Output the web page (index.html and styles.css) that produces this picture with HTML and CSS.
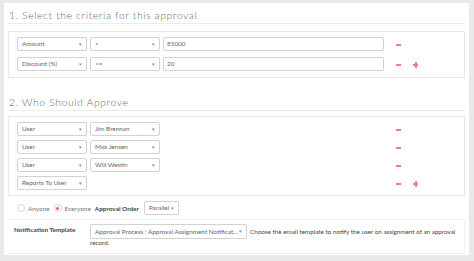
FILE: index.html
```html
<!DOCTYPE html>
<html lang="en">
<head>
    <meta charset="UTF-8">
    <title>Approval Criteria</title>
    <link rel="stylesheet" href="styles.css">
</head>
<body>
    <div class="panel">
        <h2 class="section-title">1. Select the criteria for this approval</h2>

        <!-- Criteria rows -->
        <div class="box">
            <div class="row">
                <div class="select">Amount<span class="caret">&#9662;</span></div>
                <div class="select">&gt;<span class="caret">&#9662;</span></div>
                <div class="input">85000</div>
                <div class="actions"><span class="minus"></span></div>
            </div>
            <div class="row">
                <div class="select">Discount (%)<span class="caret">&#9662;</span></div>
                <div class="select">&gt;=<span class="caret">&#9662;</span></div>
                <div class="input">20</div>
                <div class="actions"><span class="minus"></span><span class="plus"></span></div>
            </div>
        </div>

        <h2 class="section-title second">2. Who Should Approve</h2>

        <!-- Approver rows -->
        <div class="box approvers">
            <div class="row">
                <div class="select">User<span class="caret">&#9662;</span></div>
                <div class="select">Jim Brennan<span class="caret">&#9662;</span></div>
                <div></div>
                <div class="actions"><span class="minus"></span></div>
            </div>
            <div class="row">
                <div class="select">User<span class="caret">&#9662;</span></div>
                <div class="select">Max Jensen<span class="caret">&#9662;</span></div>
                <div></div>
                <div class="actions"><span class="minus"></span></div>
            </div>
            <div class="row">
                <div class="select">User<span class="caret">&#9662;</span></div>
                <div class="select">Will Westin<span class="caret">&#9662;</span></div>
                <div></div>
                <div class="actions"><span class="minus"></span></div>
            </div>
            <div class="row">
                <div class="select">Reports To User<span class="caret">&#9662;</span></div>
                <div></div>
                <div></div>
                <div class="actions"><span class="minus"></span><span class="plus"></span></div>
            </div>
        </div>

        <div class="order-row">
            <span class="radio"></span><span class="radio-label">Anyone</span>
            <span class="radio checked"></span><span class="radio-label">Everyone</span>
            <span class="label">Approval Order</span>
            <div class="select small">Parallel<span class="caret">&#9662;</span></div>
        </div>

        <div class="notify">
            <span class="label notify-label">Notification Template</span>
            <div class="notify-field">
                <div class="notify-line">
                    <div class="select wide">Approval Process : Approval Assignment Notificat...<span class="caret">&#9662;</span></div>
                    <span class="help">Choose the email template to notify the user on assignment of an approval</span>
                </div>
                <span class="help">record.</span>
            </div>
        </div>
    </div>
</body>
</html>
```

FILE: styles.css
```css
/* Page frame */
body {
    margin: 0;
    background-color: #e9e9e9;
    padding: 3px 5px 6px 4px;
    font-family: Lato, "Open Sans", sans-serif;
    font-size: 6.4px;
    color: #555;
}

.panel {
    background-color: #fff;
    height: 252px;
    padding: 0 4px;
}

/* Section headings */
.section-title {
    margin: 0;
    padding: 4px 0 0 1px;
    height: 16px;
    line-height: 16px;
    font-size: 10.5px;
    font-weight: 300;
    letter-spacing: 0.55px;
    color: #6a6a6a;
    border-bottom: 1px solid #ececec;
}

.section-title.second {
    margin-top: 12px;
}

.box {
    margin-top: 7px;
    border: 1px solid #e8e8e8;
    padding: 5px 6px 6px 8px;
    display: flex;
    flex-direction: column;
    gap: 6px;
}

.box.approvers {
    margin-top: 5px;
    padding-bottom: 5px;
    gap: 4px;
}

.row {
    display: grid;
    grid-template-columns: 70px 70px 221px auto;
    column-gap: 3px;
    height: 14px;
}

/* Fake select and input controls */
.select,
.input {
    position: relative;
    border: 1px solid #d2d2d2;
    border-radius: 2px;
    padding: 0 4px;
    line-height: 12px;
    color: #666;
    white-space: nowrap;
    overflow: hidden;
}

.input {
    padding-left: 3px;
}

.caret {
    position: absolute;
    right: 4px;
    top: 0;
    font-size: 5px;
    color: #888;
}

.select.small {
    width: 26px;
    height: 12px;
    padding-right: 3px;
}

.select.wide {
    width: 147px;
    height: 13px;
    line-height: 13px;
}

.actions {
    display: flex;
    align-items: center;
    gap: 12px;
    padding-left: 9px;
}

.minus,
.plus {
    position: relative;
    width: 5px;
    height: 5px;
}

.minus::before,
.plus::before,
.plus::after {
    content: "";
    position: absolute;
    background-color: #ec8088;
}

.minus::before,
.plus::before {
    left: 0;
    top: 2px;
    width: 5px;
    height: 2px;
}

.plus::after {
    left: 2px;
    top: 0;
    width: 2px;
    height: 6px;
}

/* Approval order */
.order-row {
    display: flex;
    align-items: center;
    height: 14px;
    margin-top: 5px;
    padding-left: 9px;
}

.radio {
    width: 6px;
    height: 6px;
    border: 1px solid #d4d4d4;
    border-radius: 50%;
    margin-right: 3px;
    position: relative;
}

.radio.checked::after {
    content: "";
    position: absolute;
    left: 1.5px;
    top: 1.5px;
    width: 3px;
    height: 3px;
    border-radius: 50%;
    background-color: #e8606a;
}

.radio-label {
    margin-right: 4px;
    color: #777;
}

.label {
    font-weight: bold;
    color: #444;
    margin-right: 5px;
}

/* Notification template */
.notify {
    display: flex;
    margin-top: 4px;
    padding: 4px 0 0 6px;
    height: 29px;
    border-top: 1px solid #f0f0f0;
    border-right: 1px solid #f0f0f0;
    border-bottom: 1px solid #f0f0f0;
}

.notify-label {
    width: 76px;
    margin-right: 0;
    padding-top: 2px;
}

.notify-line {
    display: flex;
    align-items: center;
    gap: 3px;
}

.help {
    color: #444;
    font-size: 6.3px;
}
```
